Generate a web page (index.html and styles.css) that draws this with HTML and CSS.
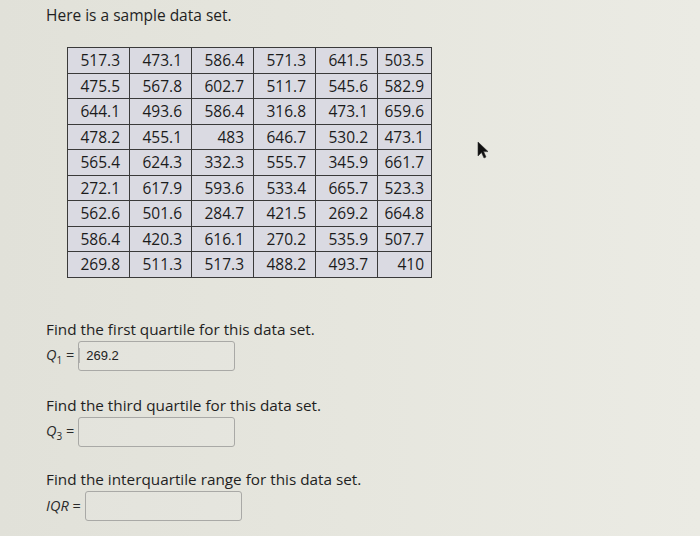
FILE: index.html
```html
<!DOCTYPE html>
<html>
<head>
<meta charset="utf-8">
<link rel="stylesheet" href="styles.css">
</head>
<body>
<div class="page">
  <p class="intro">Here is a sample data set.</p>
  <table class="data">
    <tr><td>517.3</td><td>473.1</td><td>586.4</td><td>571.3</td><td>641.5</td><td>503.5</td></tr>
    <tr><td>475.5</td><td>567.8</td><td>602.7</td><td>511.7</td><td>545.6</td><td>582.9</td></tr>
    <tr><td>644.1</td><td>493.6</td><td>586.4</td><td>316.8</td><td>473.1</td><td>659.6</td></tr>
    <tr><td>478.2</td><td>455.1</td><td>483</td><td>646.7</td><td>530.2</td><td>473.1</td></tr>
    <tr><td>565.4</td><td>624.3</td><td>332.3</td><td>555.7</td><td>345.9</td><td>661.7</td></tr>
    <tr><td>272.1</td><td>617.9</td><td>593.6</td><td>533.4</td><td>665.7</td><td>523.3</td></tr>
    <tr><td>562.6</td><td>501.6</td><td>284.7</td><td>421.5</td><td>269.2</td><td>664.8</td></tr>
    <tr><td>586.4</td><td>420.3</td><td>616.1</td><td>270.2</td><td>535.9</td><td>507.7</td></tr>
    <tr><td>269.8</td><td>511.3</td><td>517.3</td><td>488.2</td><td>493.7</td><td>410</td></tr>
  </table>

  <div class="question">
    <p class="prompt">Find the first quartile for this data set.</p>
    <div class="answer">
      <span class="label"><i>Q</i><sub>1</sub> =</span>
      <span class="box"><span class="value">269.2</span></span>
    </div>
  </div>

  <div class="question">
    <p class="prompt">Find the third quartile for this data set.</p>
    <div class="answer">
      <span class="label"><i>Q</i><sub>3</sub> =</span>
      <span class="box"></span>
    </div>
  </div>

  <div class="question last">
    <p class="prompt">Find the interquartile range for this data set.</p>
    <div class="answer">
      <span class="label"><i>IQR</i> =</span>
      <span class="box"></span>
    </div>
  </div>
</div>
<svg class="cursor" width="12" height="18" viewBox="0 0 12 18"><path d="M1 1 L1 15 L4.5 11.5 L7 17 L9 16 L6.6 10.6 L11 10.6 Z" fill="#111" stroke="#333" stroke-width="0.6"/></svg>
</body>
</html>
```
FILE: styles.css
```css
html, body {
  margin: 0;
  padding: 0;
}
body {
  background: linear-gradient(90deg, #e1e1d9 0%, #e6e6de 50%, #ebebe4 100%);
  font-family: "Open Sans", "Liberation Sans", sans-serif;
  color: #1f1f1f;
  width: 700px;
  height: 536px;
  overflow: hidden;
  position: relative;
}
.page {
  padding: 3px 0 0 46px;
  display: flex;
  flex-direction: column;
  align-items: flex-start;
}
.intro {
  margin: 0;
  font-size: 15.5px;
  line-height: 24px;
}
.data {
  margin: 20px 0 0 21px;
  border-collapse: collapse;
  border: 1.5px solid #333;
  background: #dadae2;
  font-size: 15.5px;
  color: #1c1c1c;
}
.data td {
  border: 1px solid #3a3a3a;
  height: 24.5px;
  padding: 0 9px 0 0;
  line-height: 20px;
  text-align: right;
  width: 52px;
}
.data td:nth-child(6) { width: 46px; padding-right: 7px; }
.question {
  margin-top: 41px;
  display: flex;
  flex-direction: column;
  gap: 2px;
}
.question + .question { margin-top: 24px; }
.question.last { margin-top: 22px; }
.prompt {
  margin: 0;
  font-size: 15.3px;
  line-height: 20px;
}
.answer {
  display: flex;
  align-items: center;
  gap: 4px;
}
.label {
  font-size: 14.5px;
  color: #2a2a2a;
}
.label sub { font-size: 10px; }
.box {
  width: 155px;
  height: 28px;
  border: 1px solid #a9a9a6;
  border-radius: 3px;
  display: flex;
  align-items: center;
  background: rgba(255,255,255,0.06);
}
.value {
  font-family: "Liberation Sans", Arial, sans-serif;
  font-size: 13px;
  padding-left: 6px;
  border-left: 1px solid #b5b5b2;
  color: #222;
}
.cursor {
  position: absolute;
  left: 477px;
  top: 141px;
}
```
